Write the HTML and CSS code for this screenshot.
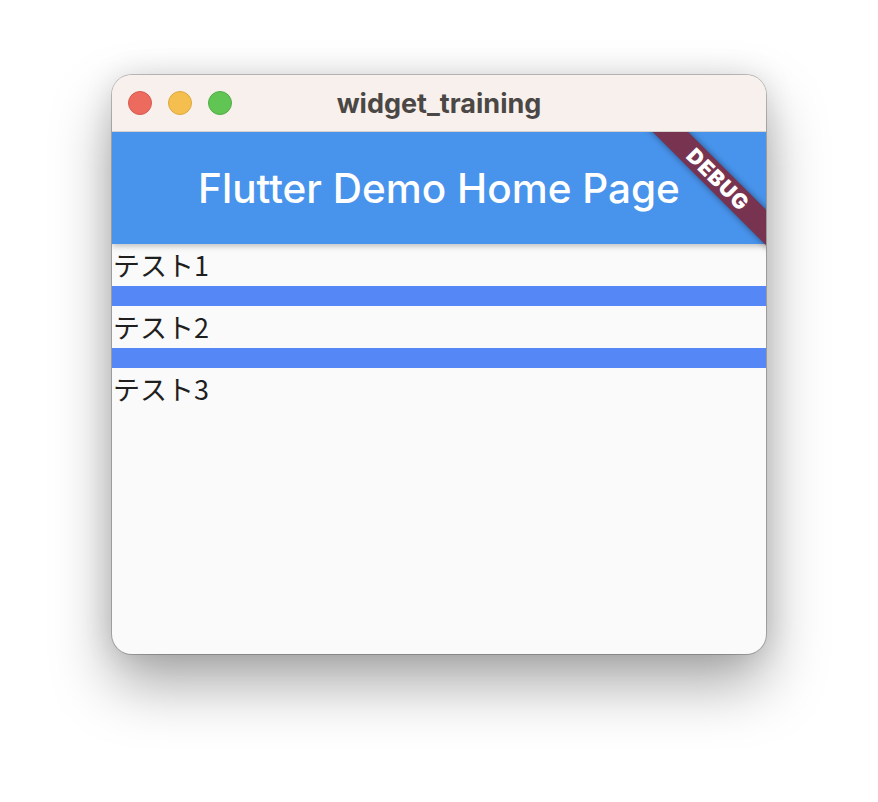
FILE: index.html
```html
<!DOCTYPE html>
<html lang="ja">
<head>
<meta charset="utf-8">
<title>widget_training</title>
<link rel="stylesheet" href="styles.css">
</head>
<body>
<div class="window">
  <div class="titlebar">
    <div class="lights">
      <span class="light red"></span>
      <span class="light yellow"></span>
      <span class="light green"></span>
    </div>
    <div class="title">widget_training</div>
    <div></div>
  </div>
  <div class="content">
    <header class="appbar">Flutter Demo Home Page</header>
    <main class="list">
      <div class="item">テスト1</div>
      <div class="divider"></div>
      <div class="item">テスト2</div>
      <div class="divider"></div>
      <div class="item">テスト3</div>
    </main>
    <div class="ribbon">DEBUG</div>
  </div>
</div>
</body>
</html>
```

FILE: styles.css
```css
html, body {
  margin: 0;
  padding: 0;
  background: #ffffff;
}
body {
  width: 878px;
  height: 802px;
  padding-top: 75px;
  box-sizing: border-box;
  overflow: hidden;
}
.window {
  width: 654px;
  height: 579px;
  margin: 0 auto;
  border-radius: 20px;
  overflow: hidden;
  background: #fafafa;
  display: flex;
  flex-direction: column;
  box-shadow: 0 0 0 1px rgba(0,0,0,0.22), 0 30px 60px rgba(0,0,0,0.34), 0 0 30px rgba(0,0,0,0.12);
}
.titlebar {
  height: 56px;
  flex: none;
  background: #f7f0ed;
  border-bottom: 1px solid #d8d2cf;
  display: grid;
  grid-template-columns: 1fr auto 1fr;
  align-items: center;
}
.lights {
  display: flex;
  gap: 16px;
  padding-left: 16px;
}
.light {
  width: 24px;
  height: 24px;
  border-radius: 50%;
  box-sizing: border-box;
}
.red { background: #ec6a5e; border: 1px solid #d65a4f; }
.yellow { background: #f4bf4f; border: 1px solid #dea73e; }
.green { background: #61c554; border: 1px solid #50ad44; }
.title {
  font-family: Inter, "Noto Sans", sans-serif;
  font-weight: 700;
  font-size: 27px;
  color: #4b4744;
}
.content {
  flex: 1;
  position: relative;
  overflow: hidden;
  display: flex;
  flex-direction: column;
}
.appbar {
  height: 112px;
  flex: none;
  background: #4893eb;
  color: #ffffff;
  font-family: Inter, "Noto Sans", sans-serif;
  font-size: 40.5px;
  font-weight: 500;
  display: flex;
  align-items: center;
  justify-content: center;
  box-shadow: 0 2px 6px rgba(0,0,0,0.25);
  position: relative;
  z-index: 1;
}
.list {
  display: flex;
  flex-direction: column;
}
.item {
  height: 42px;
  line-height: 42px;
  font-family: "Noto Sans CJK JP", "Noto Sans", sans-serif;
  font-size: 27px;
  color: #1f1f1f;
  padding-left: 1px;
}
.divider {
  height: 20px;
  background: #5588f6;
}
.ribbon {
  position: absolute;
  left: 496px;
  top: 35px;
  width: 220px;
  height: 25px;
  line-height: 25px;
  transform: rotate(45deg);
  background: #773350;
  color: #ffffff;
  font-family: Inter, Roboto, sans-serif;
  font-weight: 900;
  font-size: 21px;
  text-align: center;
  letter-spacing: 1px;
  box-shadow: 0 0 6px rgba(0,0,0,0.45);
  z-index: 2;
}
```
